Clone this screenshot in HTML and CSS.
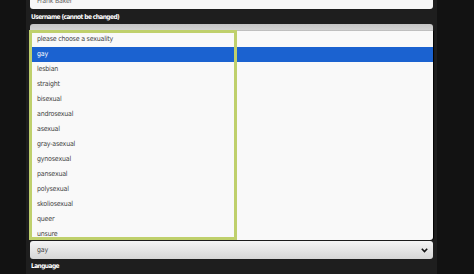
FILE: index.html
```html
<!DOCTYPE html>
<html>
<head>
	<meta charset="utf-8">
	<title>Profile</title>
	<link rel="stylesheet" href="styles.css">
</head>
<body>
	<div class="side"></div>

	<div class="panel">
		<div class="top-input"><span>Frank Baker</span></div>
		<div class="label">Username (cannot be changed)</div>

		<div class="field">
			<div class="disabled"></div>
			<ul class="popup">
				<li>please choose a sexuality</li>
				<li class="active">gay</li>
				<li>lesbian</li>
				<li>straight</li>
				<li>bisexual</li>
				<li>androsexual</li>
				<li>asexual</li>
				<li>gray-asexual</li>
				<li>gynosexual</li>
				<li>pansexual</li>
				<li>polysexual</li>
				<li>skoliosexual</li>
				<li>queer</li>
				<li>unsure</li>
			</ul>
			<div class="marker"></div>
		</div>

		<div class="select">
			<span>gay</span>
			<svg class="chevron" width="7" height="5" viewBox="0 0 7 5"><path d="M0.8 0.8 L3.5 3.6 L6.2 0.8" fill="none" stroke="#111" stroke-width="1.6"/></svg>
		</div>
		<div class="label">Language</div>
	</div>

	<div class="side right"></div>
</body>
</html>
```
FILE: styles.css
```css
body {
	margin: 0;
	height: 274px;
	overflow: hidden;
	display: flex;
	background: #111;
	font-family: "DejaVu Sans Condensed", "Liberation Sans Narrow", sans-serif;
	font-size: 7px;
	letter-spacing: -0.2px;
}

.side {
	width: 26px;
	background: #121212;
}

.side.right {
	width: 37px;
}

.panel {
	width: 403px;
	padding: 0 4px;
	background: #1e1e1e;
}

.top-input {
	height: 9px;
	overflow: hidden;
	background: #f7f7f7;
	border-radius: 0 0 3px 3px;
	padding-left: 7px;
	color: #666;
	line-height: 3px;
}

.label {
	margin-top: 3px;
	height: 11px;
	line-height: 11px;
	color: #fff;
	font-weight: bold;
	font-size: 6.6px;
	letter-spacing: -0.6px;
	padding-left: 1px;
}

.field {
	position: relative;
	height: 217px;
	margin-top: 1px;
}

.disabled {
	height: 10px;
	background: linear-gradient(#c4c4c4, #dcdcdc);
	border-radius: 3px 3px 0 0;
}

.popup {
	position: absolute;
	top: 7px;
	left: 0;
	right: 0;
	bottom: 1px;
	margin: 0;
	padding: 1px 0 0;
	list-style: none;
	overflow: hidden;
	background: #f9f9f9;
	border-radius: 0 0 3px 3px;
	box-shadow: 1px 0 1px #000;
}

.popup li {
	height: 15px;
	line-height: 15px;
	padding-left: 7px;
	color: #444;
}

.popup li.active {
	background: #1b62d0;
	color: #fff;
}

.marker {
	position: absolute;
	top: 6px;
	left: -1px;
	width: 202px;
	height: 204px;
	border: 3px solid #bfd06c;
}

.select {
	height: 18px;
	display: flex;
	align-items: center;
	justify-content: space-between;
	padding: 0 5px 0 7px;
	background: linear-gradient(#f4f4f4, #d6d6d6);
	border-radius: 3px;
	color: #444;
}

.select + .label {
	margin-top: 2px;
}
```
